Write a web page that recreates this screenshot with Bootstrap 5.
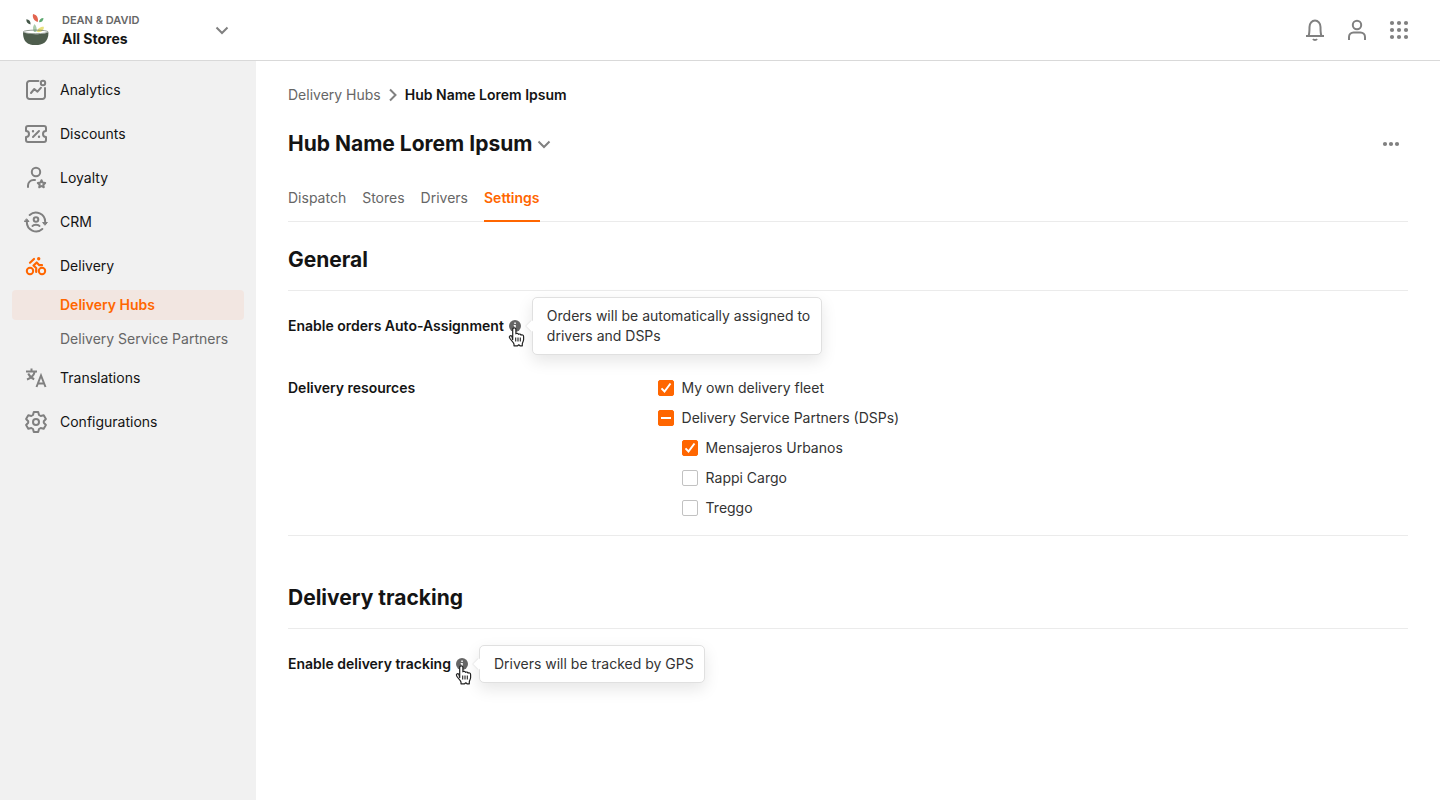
<!DOCTYPE html>
<html lang="en">
<head>
<meta charset="utf-8">
<meta name="viewport" content="width=device-width, initial-scale=1">
<title>Hub settings</title>
<link href="https://cdn.jsdelivr.net/npm/bootstrap@5.3.0/dist/css/bootstrap.min.css" rel="stylesheet">
<style>
  :root { --brand: #ff6600; --ink: #141414; --muted-ink: #666; --icon: #808080; --rule: #ebebeb; }
  body { font-family: Inter, "Liberation Sans", sans-serif; font-size: 14px; line-height: 20px; color: var(--ink); background: #fff; }
  a { text-decoration: none; color: inherit; }
  button { background: none; border: 0; padding: 0; color: inherit; }
  svg { display: block; flex: none; }
  .icon-line { fill: none; stroke: currentColor; stroke-width: 2; stroke-linecap: round; stroke-linejoin: round; }
  .icon-sharp { stroke-linecap: butt; stroke-linejoin: miter; }
  .muted { color: var(--muted-ink); }
  .glyph { color: var(--icon); }
  .glyph-brand { color: var(--brand); }

  .topbar { height: 60px; padding-right: 29px; box-shadow: 0 1px 0 #d9d9d9; position: relative; z-index: 1; }
  .store-switch { width: 256px; padding: 0 26px 0 22px; gap: 12px; }
  .store-brand { font-size: 11px; line-height: 18px; font-weight: 600; color: var(--muted-ink); }
  .top-icons { gap: 18px; }

  .sidebar { width: 256px; background: #f1f1f1; padding: 8px 0; }
  .side-item { height: 44px; padding: 0 24px; gap: 12px; }
  .submenu { padding: 2px 12px; gap: 4px; }
  .sub-item { height: 30px; padding-left: 48px; border-radius: 4px; color: var(--muted-ink); }
  .sub-item.current { background: #f2e6e1; color: var(--brand); font-weight: 600; }

  .content { padding: 24px 32px; min-width: 0; }
  .crumbs { line-height: 22px; gap: 4px; }
  .page-title { margin-top: 22px; }
  .page-title h1, .section-title { font-size: 21px; line-height: 32px; font-weight: 700; margin: 0; }
  .tabs { margin-top: 16px; gap: 16px; box-shadow: inset 0 -1px 0 var(--rule); }
  .tab-link { padding: 12px 0; border-bottom: 2px solid transparent; color: var(--muted-ink); }
  .tab-link.current { color: var(--brand); border-color: var(--brand); font-weight: 600; }
  .section-title { padding: 22px 0 14px; border-bottom: 1px solid var(--rule); }
  .setting { margin-top: 20px; }
  .setting + .setting { margin-top: 32px; }
  .setting-label { width: 33%; line-height: 30px; font-weight: 600; gap: 5px; }
  .group { padding-bottom: 12px; border-bottom: 1px solid var(--rule); margin-bottom: 24px; }

  .option { height: 30px; gap: 8px; color: #333; }
  .option.nested { padding-left: 24px; }
  .option .form-check-input { width: 16px; height: 16px; margin: 0; border: 1px solid #c2c2c2; border-radius: 2px; }
  .option .form-check-input:checked, .option .form-check-input:indeterminate { background-color: var(--brand); border-color: var(--brand); background-size: 16px 16px; background-position: center; }
  .option .form-check-input:checked { background-image: url("data:image/svg+xml,%3Csvg xmlns='http://www.w3.org/2000/svg' viewBox='0 0 16 16'%3E%3Cpath d='M3.5 8.400l3 3.100L12.500 3.500' fill='none' stroke='%23fff' stroke-width='2'/%3E%3C/svg%3E"); }
  .option .form-check-input:indeterminate { background-image: url("data:image/svg+xml,%3Csvg xmlns='http://www.w3.org/2000/svg' viewBox='0 0 16 16'%3E%3Cpath d='M3 8h10' stroke='%23fff' stroke-width='2'/%3E%3C/svg%3E"); }

  .hint { position: relative; width: 12px; height: 12px; }
  .pointer { position: absolute; left: -2px; top: 6px; }
  .bubble { position: absolute; left: 23px; top: 50%; transform: translateY(-50%); width: max-content; max-width: 290px; padding: 8px 10px 8px 14px; border: 1px solid #e0e0e0; border-radius: 5px; background: #fff; color: #333; font-weight: 400; line-height: 20px; box-shadow: 0 6px 16px rgba(0,0,0,.1); }
  .bubble::before { content: ""; position: absolute; left: -5px; top: 50%; width: 8px; height: 8px; margin-top: -4px; background: #fff; transform: rotate(45deg); box-shadow: -1px 1px 1px rgba(0,0,0,.06); }
</style>
</head>
<body>
<svg width="0" height="0" class="position-absolute" aria-hidden="true">
  <symbol id="chevron" viewBox="0 0 16 16"><path d="M2.5 5.5 8 11l5.500-5.500" fill="none" stroke="currentColor" stroke-width="2"/></symbol>
  <symbol id="info" viewBox="0 0 12 12"><circle cx="6" cy="6" r="6" fill="#666"/><path d="M5.300 2.500h1.500v1.500H5.300zM4.700 5h2.100v4H5.300V6h-.6z" fill="#fff"/></symbol>
  <symbol id="hand" viewBox="0 0 18 22"><path d="M5.700 13.500V3.500C5.700 1.200 8.900 1.200 8.900 3.500v4.300c.5-.8 2.300-.7 2.700.6.700-.7 2.200-.4 2.400.7 1-.7 2.600-.1 2.600 1.300v3.100c0 2-1.300 3-1.300 4.600v1.700h-2.300l-1.200-1-1.200 1H7v-1.500c0-1.800-2.900-4-4.200-6.100-1.200-1.900.8-3.300 2.100-1.900z" fill="#fff" stroke="#222" stroke-width="1.200" stroke-linejoin="round"/><path d="M8.700 11.500v4M11 11.500v4M13.300 11.500v4" stroke="#222" stroke-width="1.100"/></symbol>
</svg>

<div class="d-flex flex-column min-vh-100">
  <header class="topbar d-flex align-items-center justify-content-between bg-white">
    <button type="button" class="store-switch d-flex align-items-center h-100 text-start">
      <svg width="28" height="32" viewBox="0 0 28 32" aria-hidden="true">
        <path d="M12 18c-1.600-3-1.200-5.900.6-8 1.900 2.200 2.600 5 1.800 8z" fill="#aacbad"/>
        <path d="M15 18c.2-3 2.800-5.400 6.800-5.200.3 3.600-2.200 6-6.800 5.200z" fill="#e8e17c"/>
        <path d="M11 0c4 1 5.500 3.800 4.800 8C12 6.800 10.200 4 11 0z" fill="#e2644f"/>
        <path d="M4.300 5.300c3 .3 4.400 2.100 4.300 5.100-2.900-.4-4.400-2.200-4.300-5.100z" fill="#435647"/>
        <path d="M21.500 4c-.2 2.900-1.700 4.400-4.500 4.300.2-2.700 1.700-4.300 4.500-4.300z" fill="#5eaa72"/>
        <path d="M1 18.200C1 30 8 31 14 31s12.500-2 12.500-12.800C22 20.800 6 20.800 1 18.200z" fill="#4e5d4d"/>
        <ellipse cx="13.700" cy="17.900" rx="12.400" ry="1.800" fill="none" stroke="#4e5d4d" stroke-width=".6"/>
      </svg>
      <span class="flex-grow-1 d-flex flex-column">
        <span class="store-brand">DEAN &amp; DAVID</span>
        <span class="fw-bold">All Stores</span>
      </span>
      <svg class="glyph" width="16" height="16" aria-hidden="true"><use href="#chevron"/></svg>
    </button>
    <div class="top-icons d-flex align-items-center glyph">
      <button type="button" aria-label="Notifications"><svg class="icon-line icon-sharp" width="24" height="24" viewBox="0 0 24 24"><path d="M3 18h18M5.500 18c1-2.200 1-5 1-9a5.500 6.500 0 0 1 11 0c0 4 0 6.800 1 9M10 21c.9 1.300 3.100 1.300 4 0"/></svg></button>
      <button type="button" aria-label="Account"><svg class="icon-line icon-sharp" width="24" height="24" viewBox="0 0 24 24"><circle cx="12" cy="7" r="4.200"/><path d="M4 22v-3a4.500 4.500 0 0 1 4.500-4.500h7A4.500 4.500 0 0 1 20 19v3"/></svg></button>
      <button type="button" aria-label="Apps"><svg width="24" height="24" viewBox="0 0 24 24" fill="currentColor"><circle cx="5" cy="5" r="2.100"/><circle cx="12" cy="5" r="2.100"/><circle cx="19" cy="5" r="2.100"/><circle cx="5" cy="12" r="2.100"/><circle cx="12" cy="12" r="2.100"/><circle cx="19" cy="12" r="2.100"/><circle cx="5" cy="19" r="2.100"/><circle cx="12" cy="19" r="2.100"/><circle cx="19" cy="19" r="2.100"/></svg></button>
    </div>
  </header>

  <div class="d-flex flex-grow-1">
    <nav class="sidebar flex-shrink-0" aria-label="Main">
      <a href="#" class="side-item d-flex align-items-center">
        <svg class="icon-line glyph" width="24" height="24" viewBox="0 0 24 24"><path d="M14.500 3H5.500A2.500 2.500 0 0 0 3 5.500v13A2.500 2.500 0 0 0 5.500 21h13a2.500 2.500 0 0 0 2.500-2.500V10M7 15l3.300-4 3.200 2.700L17 9.700"/><circle cx="19" cy="5" r="2.200"/></svg>
        <span>Analytics</span></a>
      <a href="#" class="side-item d-flex align-items-center">
        <svg class="icon-line glyph" width="24" height="24" viewBox="0 0 24 24"><path d="M4 4h16a2 2 0 0 1 2 2v3a3 3 0 0 0 0 6v3a2 2 0 0 1-2 2H4a2 2 0 0 1-2-2v-3a3 3 0 0 0 0-6V6a2 2 0 0 1 2-2zM9 15l6-6"/><path d="M9 9.300h.01M15 14.700h.01" stroke-width="2.400"/></svg>
        <span>Discounts</span></a>
      <a href="#" class="side-item d-flex align-items-center">
        <svg class="icon-line glyph" width="24" height="24" viewBox="0 0 24 24"><circle cx="12" cy="6" r="4.200"/><path d="M4 21v-1.500A5.500 5.500 0 0 1 9.500 14H11"/><path d="M17.500 14.200l1.100 2.400 2.600.3-1.900 1.800.5 2.600-2.300-1.300-2.300 1.300.5-2.600-1.900-1.800 2.600-.3z" stroke-width="2"/></svg>
        <span>Loyalty</span></a>
      <a href="#" class="side-item d-flex align-items-center">
        <svg class="icon-line glyph" width="24" height="24" viewBox="0 0 24 24"><path d="M5.700 5A9.300 9.300 0 0 1 21.200 12v1M18.300 19A9.300 9.300 0 0 1 2.800 12v-1"/><path d="M19 12.500h4.400L21.200 15zM.6 11.500H5L2.800 9z" fill="currentColor" stroke-width="1"/><circle cx="12" cy="9.500" r="2.300"/><path d="M8.500 16c1-1.800 6-1.800 7 0"/></svg>
        <span>CRM</span></a>
      <a href="#" class="side-item d-flex align-items-center">
        <svg class="icon-line glyph-brand" width="24" height="24" viewBox="0 0 24 24"><circle cx="6" cy="17" r="3.200"/><circle cx="18" cy="17" r="3.200"/><circle cx="14.700" cy="4.700" r="1.700" fill="currentColor" stroke="none"/><path d="M12.200 18v-4l-2.700-2.500 3.200-3 2.600 2.700H18M6 8.700l4-3.700" stroke-width="2.200"/></svg>
        <span>Delivery</span></a>
      <div class="submenu d-flex flex-column">
        <a href="#" class="sub-item current d-flex align-items-center" aria-current="page">Delivery Hubs</a>
        <a href="#" class="sub-item d-flex align-items-center">Delivery Service Partners</a>
      </div>
      <a href="#" class="side-item d-flex align-items-center">
        <svg class="icon-line icon-sharp glyph" width="24" height="24" viewBox="0 0 24 24"><path d="M2 5.500h11M7.500 2.500v3M10.800 5.500C10 9 7 12 3 13.500M4.200 7.500c1.300 2.700 3.500 4.700 6 5.700M12.500 21l4.500-11.500L21.500 21M14 17.500h6"/></svg>
        <span>Translations</span></a>
      <a href="#" class="side-item d-flex align-items-center">
        <svg class="icon-line glyph" width="24" height="24" viewBox="0 0 24 24"><circle cx="12" cy="12" r="3"/><path d="M9.800 2h4.400l.8 3 1.700 1 3-.8 2.200 3.800-2.100 2.200v1.600l2.100 2.200-2.200 3.800-3-.8-1.700 1-.8 3H9.800L9 19l-1.700-1-3 .8L2.100 15l2.100-2.200v-1.600L2.100 9l2.200-3.800 3 .8L9 5z"/></svg>
        <span>Configurations</span></a>
    </nav>

    <main class="content flex-grow-1">
      <nav class="crumbs d-flex align-items-center" aria-label="Breadcrumb">
        <a href="#" class="muted">Delivery Hubs</a>
        <svg class="glyph" width="16" height="16" viewBox="0 0 16 16" aria-hidden="true"><path d="M5 2.500 10.500 8 5 13.500" fill="none" stroke="currentColor" stroke-width="2"/></svg>
        <span class="fw-semibold" aria-current="page">Hub Name Lorem Ipsum</span>
      </nav>

      <div class="page-title d-flex align-items-center justify-content-between">
        <div class="d-flex align-items-center gap-1">
          <h1>Hub Name Lorem Ipsum</h1>
          <button type="button" class="glyph" aria-label="Switch hub"><svg width="16" height="16"><use href="#chevron"/></svg></button>
        </div>
        <button type="button" class="glyph me-2" aria-label="More actions"><svg width="18" height="18" viewBox="0 0 18 18" fill="currentColor"><circle cx="3" cy="9" r="2.100"/><circle cx="9" cy="9" r="2.100"/><circle cx="15" cy="9" r="2.100"/></svg></button>
      </div>

      <nav class="tabs d-flex" aria-label="Hub">
        <a href="#" class="tab-link">Dispatch</a>
        <a href="#" class="tab-link">Stores</a>
        <a href="#" class="tab-link">Drivers</a>
        <a href="#" class="tab-link current" aria-current="page">Settings</a>
      </nav>

      <section class="group">
        <h2 class="section-title">General</h2>
        <div class="setting d-flex">
          <div class="setting-label d-flex align-items-center">
            <span>Enable orders Auto-Assignment</span>
            <div class="hint">
              <svg width="12" height="12" aria-hidden="true"><use href="#info"/></svg>
              <div class="bubble" role="tooltip">Orders will be automatically assigned to drivers and DSPs</div>
              <svg class="pointer" width="18" height="22" aria-hidden="true"><use href="#hand"/></svg>
            </div>
          </div>
        </div>
        <div class="setting d-flex">
          <div class="setting-label" id="resources">Delivery resources</div>
          <div role="group" aria-labelledby="resources">
            <div class="option d-flex align-items-center"><input class="form-check-input" type="checkbox" id="own" checked><label for="own">My own delivery fleet</label></div>
            <div class="option d-flex align-items-center"><input class="form-check-input" type="checkbox" id="dsp"><label for="dsp">Delivery Service Partners (DSPs)</label></div>
            <div class="option nested d-flex align-items-center"><input class="form-check-input" type="checkbox" id="mensajeros" checked><label for="mensajeros">Mensajeros Urbanos</label></div>
            <div class="option nested d-flex align-items-center"><input class="form-check-input" type="checkbox" id="rappi"><label for="rappi">Rappi Cargo</label></div>
            <div class="option nested d-flex align-items-center"><input class="form-check-input" type="checkbox" id="treggo"><label for="treggo">Treggo</label></div>
          </div>
        </div>
      </section>

      <section>
        <h2 class="section-title">Delivery tracking</h2>
        <div class="setting d-flex">
          <div class="setting-label d-flex align-items-center">
            <span>Enable delivery tracking</span>
            <div class="hint">
              <svg width="12" height="12" aria-hidden="true"><use href="#info"/></svg>
              <div class="bubble" role="tooltip">Drivers will be tracked by GPS</div>
              <svg class="pointer" width="18" height="22" aria-hidden="true"><use href="#hand"/></svg>
            </div>
          </div>
        </div>
      </section>
    </main>
  </div>
</div>
<script src="https://cdn.jsdelivr.net/npm/bootstrap@5.3.0/dist/js/bootstrap.bundle.min.js"></script>
<script>document.getElementById('dsp').indeterminate = true;</script>
</body>
</html>
